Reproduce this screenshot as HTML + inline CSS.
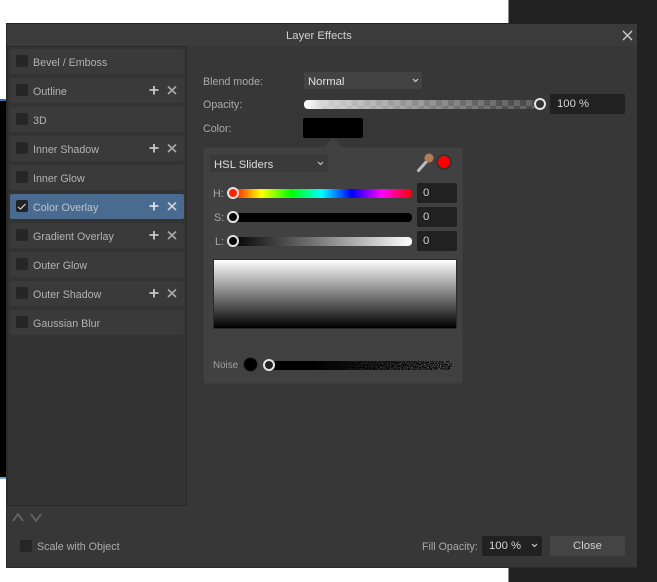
<!DOCTYPE html>
<html><head><meta charset="utf-8">
<style>
html,body{margin:0;padding:0;background:#fff;}
#r{position:relative;width:657px;height:582px;overflow:hidden;background:#fff;font-family:"Liberation Sans",sans-serif;font-size:10.7px;color:#b4b4b4;}
#r div,#r span,#r svg{position:absolute;box-sizing:border-box;}
.t{white-space:nowrap;line-height:14px;}
.item{left:10px;width:174px;height:25px;background:#3a3a3a;border-radius:2px;}
.cb{left:6px;top:6px;width:12px;height:12px;background:#262626;border-radius:2px;}
.lbl{left:23px;top:7px;white-space:nowrap;line-height:14px;color:#b2b2b2;}
.input{background:#212121;border-radius:2px;color:#d4d4d4;line-height:21px;white-space:nowrap;font-size:11.3px;}
.knob{width:12px;height:12px;border-radius:50%;border:2px solid #e4e4e4;background:#000;}
</style></head><body>
<div id="r">
<div style="left:508px;top:0;width:149px;height:582px;background:#212121"></div>
<div style="left:508px;top:0;width:1px;height:582px;background:#8a8a8a"></div>
<div style="left:0;top:99px;width:7px;height:2px;background:#2f6fb5"></div>
<div style="left:0;top:101px;width:7px;height:376px;background:#000"></div>
<div style="left:0;top:477px;width:7px;height:2px;background:#6aa6e0"></div>

<div style="left:6px;top:23px;width:631px;height:545px;background:#373737;border-top:1px solid #222;border-left:1px solid #2a2a2a;border-bottom:1px solid #2a2a2a"></div>
<div style="left:7px;top:24px;width:630px;height:22px;background:#3b3b3b"></div>
<div class="t" style="left:286px;top:29px;color:#d2d2d2;font-size:11.300px">Layer Effects</div>
<svg style="left:622px;top:30px" width="11" height="11" viewBox="0 0 11 11"><path d="M1 1L10 10M10 1L1 10" stroke="#cfcfcf" stroke-width="1.300" fill="none"/></svg>

<div style="left:7px;top:46px;width:180px;height:460px;background:#333;border:1px solid #2a2a2a"></div>

<div class="item" style="top:49px"><div class="cb"></div><div class="lbl">Bevel / Emboss</div></div>
<div class="item" style="top:78px"><div class="cb"></div><div class="lbl">Outline</div>
<svg style="left:139px;top:6px" width="28" height="12" viewBox="0 0 28 12"><path d="M5 2V10.500M.5 6H9.500" stroke="#c8c8c8" stroke-width="1.800" fill="none"/><path d="M19 2.500L27 10M27 2.500L19 10" stroke="#a8a8a8" stroke-width="1.700" fill="none"/></svg></div>
<div class="item" style="top:107px"><div class="cb"></div><div class="lbl">3D</div></div>
<div class="item" style="top:136px"><div class="cb"></div><div class="lbl">Inner Shadow</div>
<svg style="left:139px;top:6px" width="28" height="12" viewBox="0 0 28 12"><path d="M5 2V10.500M.5 6H9.500" stroke="#c8c8c8" stroke-width="1.800" fill="none"/><path d="M19 2.500L27 10M27 2.500L19 10" stroke="#a8a8a8" stroke-width="1.700" fill="none"/></svg></div>
<div class="item" style="top:165px"><div class="cb"></div><div class="lbl">Inner Glow</div></div>
<div class="item" style="top:194px;background:#4a6b90"><div class="cb" style="background:#222"></div>
<svg style="left:6px;top:6px" width="12" height="12" viewBox="0 0 12 12"><path d="M2 7L4.500 9L9.500 4" stroke="#ddd" stroke-width="1.100" fill="none"/></svg>
<div class="lbl" style="color:#bcc4ce">Color Overlay</div>
<svg style="left:139px;top:6px" width="28" height="12" viewBox="0 0 28 12"><path d="M5 2V10.500M.5 6H9.500" stroke="#dde" stroke-width="1.800" fill="none"/><path d="M19 2.500L27 10M27 2.500L19 10" stroke="#c8d0da" stroke-width="1.700" fill="none"/></svg></div>
<div class="item" style="top:223px"><div class="cb"></div><div class="lbl">Gradient Overlay</div>
<svg style="left:139px;top:6px" width="28" height="12" viewBox="0 0 28 12"><path d="M5 2V10.500M.5 6H9.500" stroke="#c8c8c8" stroke-width="1.800" fill="none"/><path d="M19 2.500L27 10M27 2.500L19 10" stroke="#a8a8a8" stroke-width="1.700" fill="none"/></svg></div>
<div class="item" style="top:252px"><div class="cb"></div><div class="lbl">Outer Glow</div></div>
<div class="item" style="top:281px"><div class="cb"></div><div class="lbl">Outer Shadow</div>
<svg style="left:139px;top:6px" width="28" height="12" viewBox="0 0 28 12"><path d="M5 2V10.500M.5 6H9.500" stroke="#c8c8c8" stroke-width="1.800" fill="none"/><path d="M19 2.500L27 10M27 2.500L19 10" stroke="#a8a8a8" stroke-width="1.700" fill="none"/></svg></div>
<div class="item" style="top:310px"><div class="cb"></div><div class="lbl">Gaussian Blur</div></div>

<svg style="left:12px;top:512px" width="30" height="10" viewBox="0 0 30 10"><path d="M1 9L6 2L11 9M19 2L24 9L29 2" stroke="#666" stroke-width="1.800" fill="none"/></svg>
<div style="left:20px;top:540px;width:12px;height:12px;background:#262626;border-radius:2px"></div>
<div class="t" style="left:37px;top:540px;color:#adadad">Scale with Object</div>

<div class="t" style="left:203px;top:75px;color:#aaa">Blend mode:</div>
<div style="left:304px;top:72px;width:118px;height:17px;background:#434343;border-radius:2px"></div>
<div class="t" style="left:308px;top:75px;color:#e2e2e2;font-size:11.300px">Normal</div>
<svg style="left:412px;top:78px" width="7" height="5" viewBox="0 0 7 5"><path d="M1 1L3.500 3.500L6 1" stroke="#ddd" stroke-width="1" fill="none"/></svg>

<div class="t" style="left:203px;top:98px;color:#aaa">Opacity:</div>
<div style="left:304px;top:100px;width:232px;height:9px;border-radius:4px;background:linear-gradient(90deg,#fff,rgba(255,255,255,.75) 8%,rgba(255,255,255,.45) 40%,rgba(255,255,255,.06) 85%,rgba(255,255,255,0)),repeating-conic-gradient(#626262 0 25%,#484848 0 50%) 0 0/12px 12px"></div>
<div class="knob" style="left:534px;top:98px;background:#333"></div>
<div class="input" style="left:550px;top:94px;width:75px;height:20px;padding-left:7px">100 %</div>

<div class="t" style="left:203px;top:122px;color:#aaa">Color:</div>
<div style="left:303px;top:118px;width:60px;height:20px;background:#000;border-radius:2px"></div>

<div style="left:203px;top:147px;width:260px;height:237px;background:#414141;border:1px solid #3c3c3c;border-radius:3px"></div>
<svg style="left:323px;top:138px" width="20" height="10" viewBox="0 0 20 10"><path d="M0 10L10 0L20 10Z" fill="#414141"/></svg>
<div style="left:210px;top:155px;width:118px;height:17px;background:#3a3a3a;border-radius:2px"></div>
<div class="t" style="left:214px;top:158px;color:#dcdcdc;font-size:11.300px">HSL Sliders</div>
<svg style="left:317px;top:161px" width="7" height="5" viewBox="0 0 7 5"><path d="M1 1L3.500 3.500L6 1" stroke="#ccc" stroke-width="1" fill="none"/></svg>

<svg style="left:415px;top:152px" width="24" height="22" viewBox="0 0 24 22"><path d="M3.500 18.500L11.500 9.500" stroke="#bdbdbd" stroke-width="3" fill="none" stroke-linecap="round"/><circle cx="14" cy="6" r="4.500" fill="#b57a58"/></svg>
<div style="left:436px;top:154px;width:16px;height:16px;border-radius:50%;background:#f00;border:2px solid #333"></div>

<div class="t" style="left:213px;top:187px;color:#a8a8a8">H:</div>
<div style="left:231px;top:189px;width:181px;height:9px;border-radius:4px;background:linear-gradient(90deg,#f00,#ff0 16.600%,#0f0 33.300%,#0ff 50%,#00f 66.600%,#f0f 83.300%,#f00)"></div>
<div class="knob" style="left:227px;top:187px;background:#f20;"></div>
<div class="input" style="left:417px;top:183px;width:40px;height:20px;padding-left:6px">0</div>

<div class="t" style="left:214px;top:211px;color:#a8a8a8">S:</div>
<div style="left:231px;top:213px;width:181px;height:9px;border-radius:4px;background:#000"></div>
<div class="knob" style="left:227px;top:211px"></div>
<div class="input" style="left:417px;top:207px;width:40px;height:20px;padding-left:6px">0</div>

<div class="t" style="left:215px;top:235px;color:#a8a8a8">L:</div>
<div style="left:231px;top:237px;width:181px;height:9px;border-radius:4px;background:linear-gradient(90deg,#000,#fff)"></div>
<div class="knob" style="left:227px;top:235px"></div>
<div class="input" style="left:417px;top:231px;width:40px;height:20px;padding-left:6px">0</div>

<div style="left:213px;top:259px;width:244px;height:70px;border:1px solid #2a2a2a;background:linear-gradient(180deg,#fff,#000)"></div>

<div class="t" style="left:213px;top:359px;color:#a0a0a0;font-size:9.800px">Noise</div>
<div style="left:243px;top:357px;width:15px;height:15px;border-radius:50%;background:#000;border:1px solid #333"></div>
<div style="left:265px;top:361px;width:187px;height:9px;border-radius:4px;background:#000;overflow:hidden">
<svg style="left:0;top:0" width="187" height="9" viewBox="0 0 187 9"><defs><filter id="n" x="0" y="0" width="100%" height="100%"><feTurbulence type="fractalNoise" baseFrequency="0.9" numOctaves="2" seed="4"/><feColorMatrix type="matrix" values="0 0 0 0 1 0 0 0 0 1 0 0 0 0 1 1.600 0 0 0 -0.650"/></filter><linearGradient id="g"><stop offset="0.25" stop-color="#000"/><stop offset="1" stop-color="#fff"/></linearGradient><mask id="m"><rect width="187" height="9" fill="url(#g)"/></mask></defs><g mask="url(#m)"><rect width="187" height="9" filter="url(#n)"/></g></svg></div>
<div class="knob" style="left:263px;top:359px;background:#222"></div>

<div class="t" style="left:422px;top:540px;color:#aaa">Fill Opacity:</div>
<div class="input" style="left:482px;top:536px;width:60px;height:20px;padding-left:7px">100 %</div>
<svg style="left:531px;top:543px" width="7" height="5" viewBox="0 0 7 5"><path d="M1 1L3.500 3.500L6 1" stroke="#ddd" stroke-width="1" fill="none"/></svg>
<div style="left:550px;top:536px;width:75px;height:20px;background:#444;border-radius:2px;color:#d0d0d0;text-align:center;line-height:21px;font-size:11.300px">Close</div>
</div>
</body></html>
